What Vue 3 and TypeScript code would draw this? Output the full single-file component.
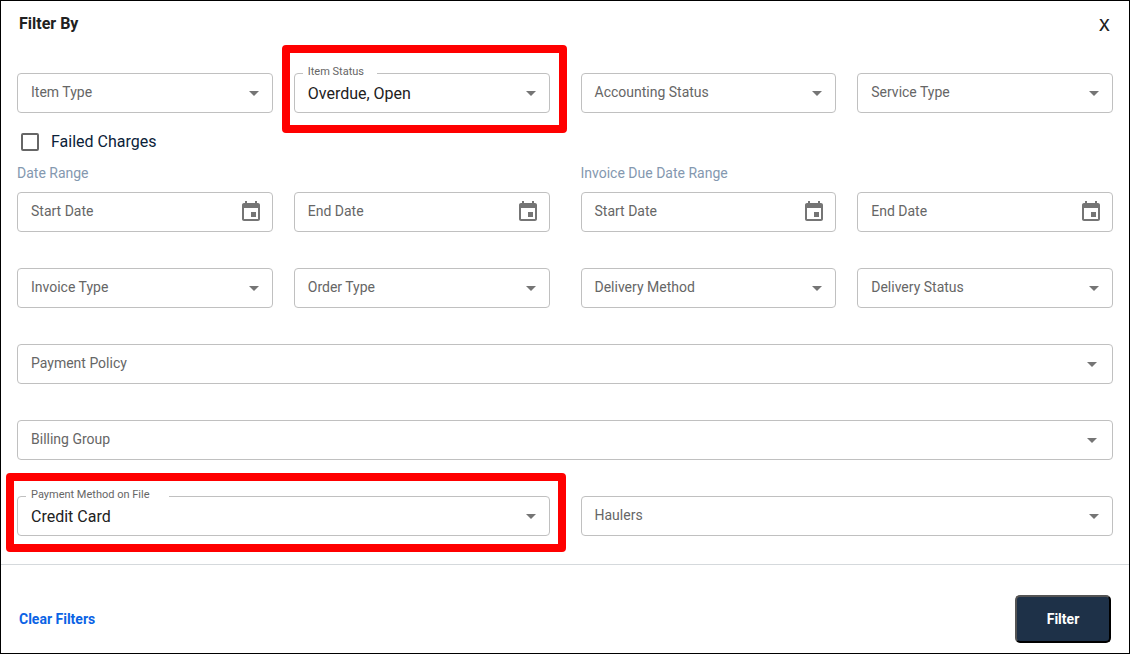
<script setup lang="ts">
import { reactive, ref } from 'vue'

interface Field {
  id: string
  label: string
  kind: 'select' | 'date'
  options?: string[]
  wide?: boolean
  mark?: 'status' | 'payment'
}

const select = (id: string, label: string, options: string[] = []): Field => ({
  id,
  label,
  kind: 'select',
  options,
})
const date = (id: string, label: string): Field => ({ id, label, kind: 'date' })

const statusRow: Field[][] = [
  [
    select('itemType', 'Item Type', ['Invoice', 'Order']),
    { ...select('itemStatus', 'Item Status', ['Overdue, Open', 'Paid']), mark: 'status' },
  ],
  [select('accountingStatus', 'Accounting Status'), select('serviceType', 'Service Type')],
]

const dateGroups = [
  { title: 'Date Range', fields: [date('start', 'Start Date'), date('end', 'End Date')] },
  { title: 'Invoice Due Date Range', fields: [date('dueStart', 'Start Date'), date('dueEnd', 'End Date')] },
]

const lowerRows: Field[][][] = [
  [
    [select('invoiceType', 'Invoice Type'), select('orderType', 'Order Type')],
    [select('deliveryMethod', 'Delivery Method'), select('deliveryStatus', 'Delivery Status')],
  ],
  [[{ ...select('paymentPolicy', 'Payment Policy'), wide: true }]],
  [[{ ...select('billingGroup', 'Billing Group'), wide: true }]],
  [
    [{ ...select('paymentMethod', 'Payment Method on File', ['Credit Card', 'ACH']), mark: 'payment' }],
    [select('haulers', 'Haulers')],
  ],
]

const initial: Record<string, string> = {
  itemStatus: 'Overdue, Open',
  paymentMethod: 'Credit Card',
}
const values = reactive<Record<string, string>>({ ...initial })
const failedCharges = ref(false)

function clearFilters() {
  for (const key of Object.keys(values)) values[key] = ''
  failedCharges.value = false
}
</script>

<template>
  <main class="dialog">
    <header class="header">
      <h1 class="title">Filter By</h1>
      <button type="button" class="close" aria-label="Close">X</button>
    </header>

    <form class="form" @submit.prevent>
      <div class="body">
        <section>
          <div class="row">
            <div v-for="(half, h) in statusRow" :key="h" class="half">
              <div v-for="f in half" :key="f.id" class="field" :class="{ filled: values[f.id] }">
                <select :id="f.id" v-model="values[f.id]" class="control">
                  <option value=""></option>
                  <option v-for="o in f.options" :key="o">{{ o }}</option>
                </select>
                <label :for="f.id" class="label">{{ f.label }}</label>
                <svg class="arrow" viewBox="0 0 24 24" aria-hidden="true"><path d="M7 10l5 5 5-5z" /></svg>
                <span v-if="f.mark" class="mark" :class="f.mark"></span>
              </div>
            </div>
          </div>

          <label class="check">
            <input v-model="failedCharges" type="checkbox" class="box" />
            Failed Charges
          </label>

          <div class="row">
            <div v-for="g in dateGroups" :key="g.title" class="group">
              <h2 class="group-title">{{ g.title }}</h2>
              <div class="half">
                <div v-for="f in g.fields" :key="f.id" class="field" :class="{ filled: values[f.id] }">
                  <input :id="f.id" v-model="values[f.id]" type="text" class="control" />
                  <label :for="f.id" class="label">{{ f.label }}</label>
                  <button type="button" class="picker" :aria-label="'Choose ' + f.label">
                    <svg viewBox="0 0 24 24" aria-hidden="true">
                      <path
                        d="M17 12h-5v5h5v-5zM16 1v2H8V1H6v2H5c-1.110 0-1.990.9-1.990 2L3 19c0 1.100.89 2 2 2h14c1.100 0 2-.9 2-2V5c0-1.100-.9-2-2-2h-1V1h-2zm3 18H5V8h14v11z"
                      />
                    </svg>
                  </button>
                </div>
              </div>
            </div>
          </div>
        </section>

        <div v-for="(row, r) in lowerRows" :key="r" class="row">
          <div v-for="(half, h) in row" :key="h" class="half">
            <div v-for="f in half" :key="f.id" class="field" :class="{ filled: values[f.id], wide: f.wide }">
              <select :id="f.id" v-model="values[f.id]" class="control">
                <option value=""></option>
                <option v-for="o in f.options" :key="o">{{ o }}</option>
              </select>
              <label :for="f.id" class="label">{{ f.label }}</label>
              <svg class="arrow" viewBox="0 0 24 24" aria-hidden="true"><path d="M7 10l5 5 5-5z" /></svg>
              <span v-if="f.mark" class="mark" :class="f.mark"></span>
            </div>
          </div>
        </div>
      </div>

      <footer class="footer">
        <button type="button" class="clear" @click="clearFilters">Clear Filters</button>
        <button type="submit" class="submit">Filter</button>
      </footer>
    </form>
  </main>
</template>

<style>
body {
  margin: 0;
  background: #fff;
}
</style>

<style scoped>
.dialog,
.dialog * {
  box-sizing: border-box;
}
.dialog {
  display: flex;
  flex-direction: column;
  min-height: 100vh;
  border: 1px solid #000;
  background: #fff;
  color: #212121;
  font-family: Roboto, 'Liberation Sans', sans-serif;
}
button,
input,
select {
  margin: 0;
  font-family: inherit;
}
.header {
  display: flex;
  align-items: center;
  justify-content: space-between;
  height: 44px;
  padding: 2px 19px 0 18px;
}
.title {
  margin: 0;
  font-size: 16px;
  line-height: 20px;
  font-weight: 700;
}
.close {
  padding: 2px 0 0;
  border: 0;
  background: none;
  color: #212121;
  font-family: Inter, 'Liberation Sans', sans-serif;
  font-size: 16px;
  line-height: 20px;
  font-weight: 500;
  cursor: pointer;
}
.form {
  display: flex;
  flex: 1;
  flex-direction: column;
}
.body {
  display: flex;
  flex-direction: column;
  gap: 36px;
  padding: 28px 16px;
}
.row {
  display: flex;
  gap: 31px;
}
.half {
  display: flex;
  flex: 1 1 0;
  gap: 21px;
  min-width: 0;
}
.group {
  flex: 1 1 0;
  min-width: 0;
}
.group-title {
  margin: 0 0 9px;
  color: #8498af;
  font-size: 14px;
  line-height: 20px;
  font-weight: 400;
}
.field {
  position: relative;
  flex: 1 1 0;
  min-width: 0;
}
.control {
  display: block;
  width: 100%;
  height: 40px;
  padding: 0 40px 0 13px;
  border: 1px solid #c0c0c0;
  border-radius: 4px;
  outline: 0;
  appearance: none;
  background: transparent;
  color: #212121;
  font-size: 16px;
}
.control:focus {
  border-color: #1e3148;
}
.label {
  position: absolute;
  top: 9px;
  left: 14px;
  color: #666;
  font-size: 14px;
  line-height: 20px;
  white-space: nowrap;
  pointer-events: none;
}
.filled .label {
  top: -8px;
  left: 9px;
  padding: 0 13px 0 5px;
  background: #fff;
  font-size: 11px;
  line-height: 14px;
}
.filled:has(.payment) .label {
  padding-right: 19px;
}
.arrow {
  position: absolute;
  top: 8px;
  right: 7px;
  width: 24px;
  height: 24px;
  fill: #757575;
  pointer-events: none;
}
.wide .arrow {
  right: 9px;
}
.picker {
  position: absolute;
  top: 8px;
  right: 10px;
  width: 24px;
  height: 24px;
  padding: 0;
  border: 0;
  background: none;
  cursor: pointer;
}
.picker svg {
  display: block;
  fill: #757575;
}
.mark {
  position: absolute;
  border: 8px solid #f00;
  border-radius: 4px;
  pointer-events: none;
}
.mark.status {
  inset: -28px -17px -20px -12px;
}
.mark.payment {
  inset: -23px -16px -16px -11px;
}
.check {
  display: flex;
  align-items: center;
  gap: 12px;
  width: fit-content;
  margin: 19px 0 11px 4px;
  color: #0b2239;
  font-size: 16px;
  line-height: 20px;
}
.box {
  display: grid;
  place-items: center;
  width: 18px;
  height: 18px;
  border: 2px solid #666;
  border-radius: 2px;
  appearance: none;
  background: #fff;
}
.box:checked {
  background: #1e3148;
}
.footer {
  display: flex;
  align-items: center;
  justify-content: space-between;
  padding: 30px 18px 10px;
  border-top: 1px solid #d5d9dc;
}
.clear {
  padding: 0;
  border: 0;
  background: none;
  color: #0b63e5;
  font-size: 14px;
  line-height: 20px;
  font-weight: 700;
  cursor: pointer;
}
.submit {
  width: 96px;
  height: 48px;
  border: 2px outset #000;
  border-radius: 5px;
  background: #1e3148;
  color: #fff;
  font-size: 14px;
  font-weight: 700;
  cursor: pointer;
}
</style>
